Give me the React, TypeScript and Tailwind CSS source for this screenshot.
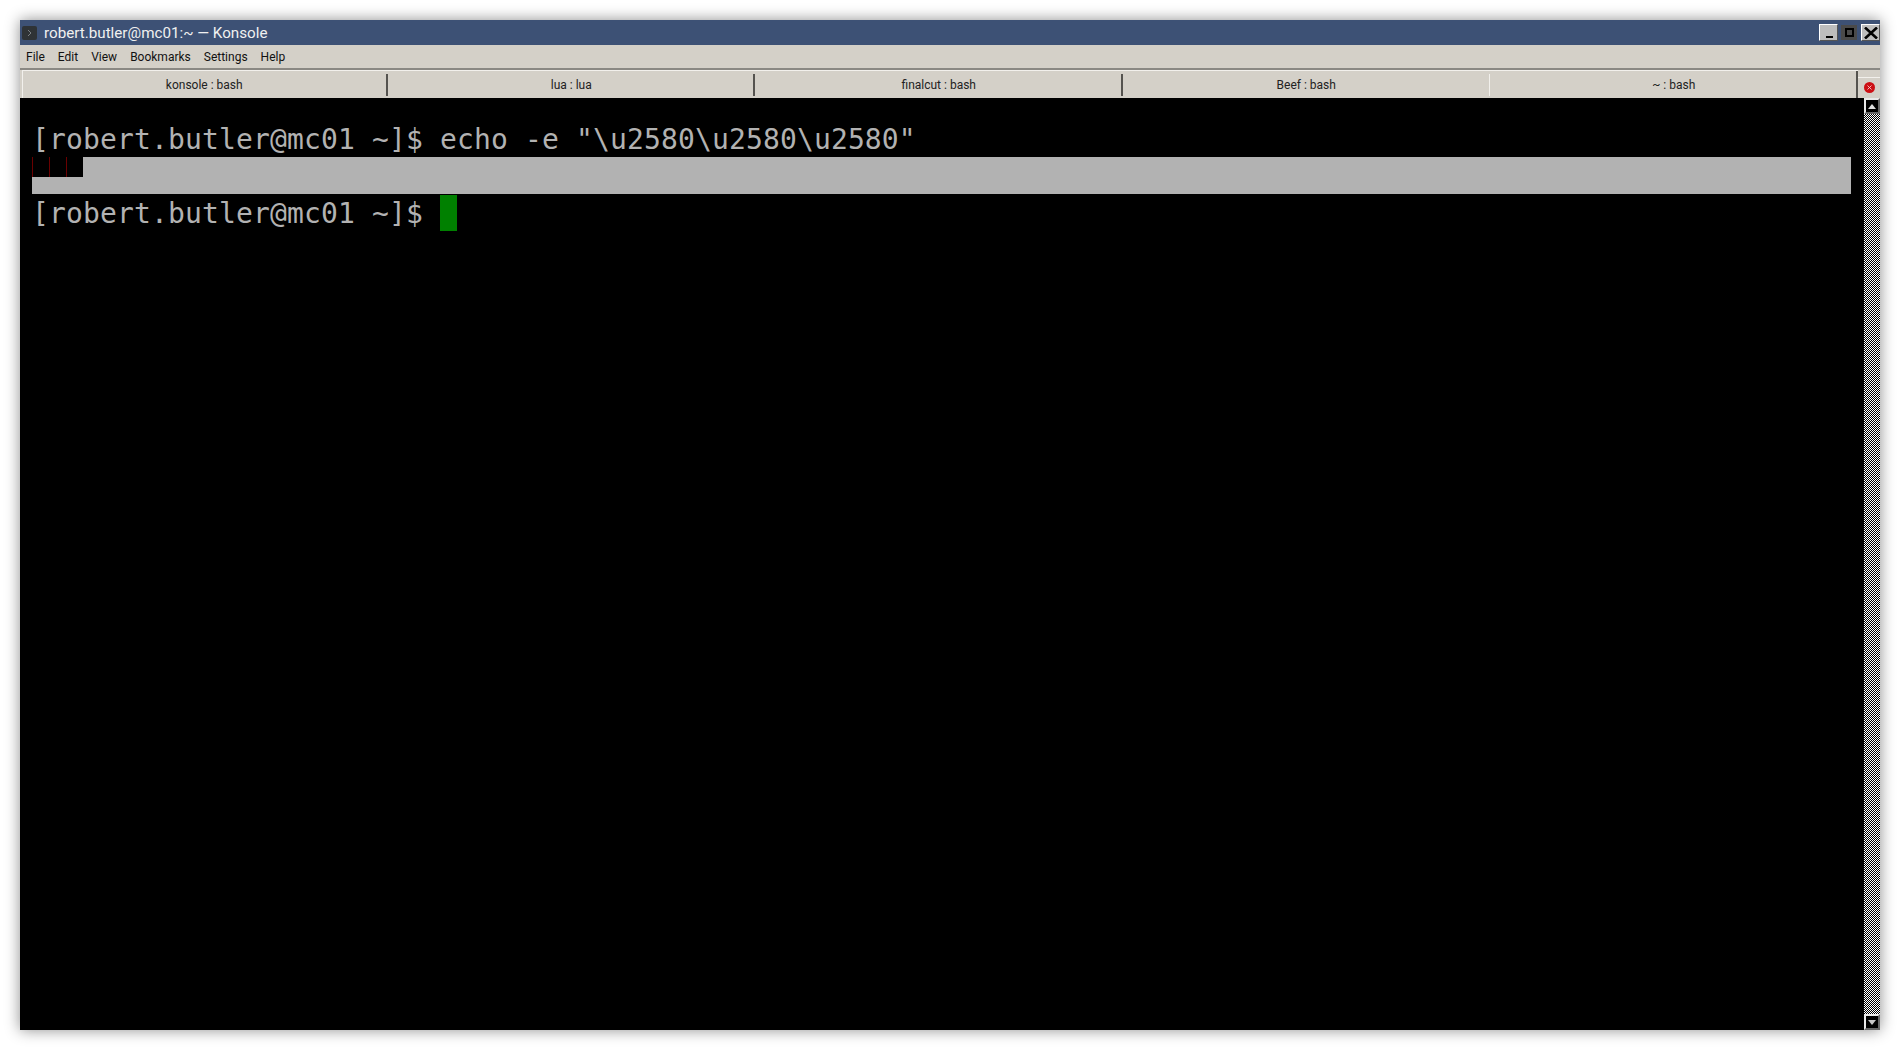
const menus = ['File', 'Edit', 'View', 'Bookmarks', 'Settings', 'Help'];
const tabs = ['konsole : bash', 'lua : lua', 'finalcut : bash', 'Beef : bash', '~ : bash'];

function TitleBar() {
  return (
    <div className="h-[25px] shrink-0 bg-[#3d5175] flex items-center pl-[2px] font-['Roboto',sans-serif] text-[15.2px] text-[#f0f0f0]">
      <div className="w-[15px] h-[14px] rounded-[2px] bg-[#2f3336] flex items-center justify-center mr-[7px]">
        <svg width="6" height="8" viewBox="0 0 6 8">
          <path d="M1 1l3 3-3 3" fill="none" stroke="#7a7f83" strokeWidth="1" />
        </svg>
      </div>
      <span className="pt-px">robert.butler@mc01:~ — Konsole</span>
      <div className="ml-auto flex items-center">
        <div className="w-[19px] h-[17px] bg-[#bdbdbd] border border-t-white border-l-white border-r-[#555] border-b-[#555] relative">
          <div className="absolute left-[6px] bottom-[2px] w-[7px] h-[2px] bg-black" />
        </div>
        <div className="w-[16px] h-[15px] bg-[#4a4a4a] ml-[3px] flex items-center justify-center">
          <div className="w-[9px] h-[9px] border-2 border-black" />
        </div>
        <div className="w-[19px] h-[17px] bg-[#bdbdbd] border border-t-white border-l-white border-r-[#555] border-b-[#555] ml-[4px] flex items-center justify-center">
          <svg width="14" height="12" viewBox="0 0 14 12">
            <path d="M1 0.5l12 11M13 0.5l-12 11" stroke="#000" strokeWidth="2.6" />
          </svg>
        </div>
      </div>
    </div>
  );
}

function MenuBar() {
  return (
    <div className="h-[25px] shrink-0 bg-[#d4d0c8] border-b-2 border-[#8a8883] flex items-center pl-[6px] gap-[13px] font-['Roboto',sans-serif] text-[12px] text-[#111]">
      {menus.map((m) => (
        <span key={m}>{m}</span>
      ))}
    </div>
  );
}

function TabBar() {
  return (
    <div className="h-[28px] shrink-0 bg-[#d4d0c8] flex font-['Roboto',sans-serif] text-[12px] text-[#222]">
      {tabs.map((t, i) => (
        <div
          key={t}
          className={`flex items-center justify-center border-t border-[#f2f0ec] relative ${i === 0 ? 'w-[365.5px] ml-[2px] pr-[2px] border-l' : 'w-[367.5px]'}`}
        >
          {t}
          {i < 3 && <div className="absolute right-0 top-[3px] bottom-[2px] w-[2px] bg-[#55534f]" />}
          {i === 3 && <div className="absolute right-0 top-[3px] bottom-[2px] w-[1px] bg-[#f2f0ec]" />}
          {i === 4 && <div className="absolute right-0 top-0 bottom-0 w-[2px] bg-[#55534f]" />}
        </div>
      ))}
      <div className="flex-1 relative">
        <div className="absolute left-0 right-0 top-[7px] h-px bg-[#f2f0ec]" />
        <div className="absolute left-[6px] top-[12px] w-[11px] h-[11px] rounded-full bg-[#cc0f14] flex items-center justify-center">
          <svg width="5" height="5" viewBox="0 0 5 5">
            <path d="M0.5 0.5l4 4M4.5 0.5l-4 4" stroke="#f6c9c9" strokeWidth="0.9" />
          </svg>
        </div>
      </div>
    </div>
  );
}

function Scrollbar() {
  return (
    <div className="w-[16px] shrink-0 flex flex-col bg-[repeating-conic-gradient(#000_0_25%,#fff_0_50%)] bg-size-[2px_2px]">
      <div className="h-[16px] bg-black border-2 border-[#e8e8e8] border-r-[#666] border-b-[#666] flex items-center justify-center">
        <svg width="8" height="5" viewBox="0 0 8 5">
          <path d="M4 0l4 5H0z" fill="#e0e0e0" />
        </svg>
      </div>
      <div className="flex-1" />
      <div className="h-[16px] bg-black border-2 border-[#e8e8e8] border-r-[#666] border-b-[#666] flex items-center justify-center">
        <svg width="8" height="5" viewBox="0 0 8 5">
          <path d="M0 0h8L4 5z" fill="#c8c8c8" />
        </svg>
      </div>
    </div>
  );
}

function Terminal() {
  return (
    <div className="flex-1 flex bg-black min-h-0">
      <div className="flex-1 pl-[12px] pr-[13px] pt-[22px] font-['DejaVu_Sans_Mono',monospace] text-[28px] tracking-[0.14px] leading-[37px] text-[#b2b2b2] whitespace-pre">
        <div className="h-[37px] pt-px">{'[robert.butler@mc01 ~]$ echo -e "\\u2580\\u2580\\u2580"'}</div>
        <div className="h-[37px] bg-[#b2b2b2]">
          <div className="w-[51px] h-[20px] flex bg-black">
            <div className="w-[17px] border-l border-[#6a0000]" />
            <div className="w-[17px] border-l border-[#6a0000]" />
            <div className="w-[17px] border-l border-[#6a0000]" />
          </div>
        </div>
        <div className="flex">
          <span className="pt-px">{'[robert.butler@mc01 ~]$ '}</span>
          <div className="w-[17px] h-[36px] mt-px bg-[#008000]" />
        </div>
      </div>
      <Scrollbar />
    </div>
  );
}

export default function App() {
  return (
    <div className="w-full h-[1050px] bg-white p-[20px] overflow-hidden">
      <div className="w-full h-full flex flex-col shadow-[0_0_14px_rgba(0,0,0,0.45)]">
        <TitleBar />
        <MenuBar />
        <TabBar />
        <Terminal />
      </div>
    </div>
  );
}
